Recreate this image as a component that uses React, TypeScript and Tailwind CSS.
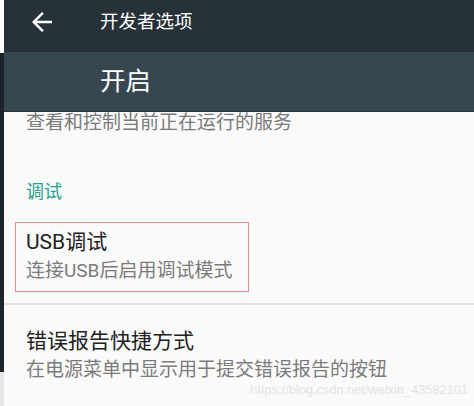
const font = { fontFamily: 'Roboto, "Noto Sans CJK SC", sans-serif' };

const BackArrow = () => (
  <svg viewBox="0 0 24 24" className="h-[30px] w-[30px] fill-white">
    <path d="M20 11H7.83l5.59-5.59L12 4l-8 8 8 8 1.41-1.41L7.83 13H20v-2z" />
  </svg>
);

export default function App() {
  return (
    <div className="relative flex h-[406px] w-[474px] overflow-hidden bg-[#fafafa]" style={font}>
      <div className="flex w-[4px] flex-col">
        <div className="h-[53px] bg-white" />
        <div className="h-[319px] bg-[#1e232b]" />
        <div className="flex-1 bg-[#e6e6e6]" />
      </div>

      <div className="flex flex-1 flex-col">
        <div className="flex h-[52px] items-center bg-[#263238] pb-[8px]">
          <div className="ml-[23px]">
            <BackArrow />
          </div>
          <span className="ml-[43px] text-[18.5px] leading-none text-white">开发者选项</span>
        </div>

        <div className="flex h-[60px] items-center border-b border-[#2a353b] bg-[#37474f] pl-[96px]">
          <span className="text-[25.5px] leading-none text-white">开启</span>
        </div>

        <div className="pl-[22px] text-[19px] leading-[22px] text-[#7a7a7a]">
          查看和控制当前正在运行的服务
        </div>

        <div className="mt-[46px] pl-[22px] text-[18px] leading-[24px] text-[#26a08f]">调试</div>

        <div className="mt-[18px] ml-[11px] w-[234px] border border-[#e88a8f] pt-[5px] pb-[7px] pl-[10px]">
          <div className="text-[21px] leading-[28px] text-[#212121]">USB调试</div>
          <div className="mt-[2px] text-[19px] leading-[26px] text-[#7a7a7a]">连接USB后启用调试模式</div>
        </div>

        <div className="mt-[11px] h-[2px] bg-[#e2e2e2]" />

        <div className="mt-[22px] pl-[22px]">
          <div className="text-[21px] leading-[28px] text-[#212121]">错误报告快捷方式</div>
          <div className="mt-[2px] text-[19px] leading-[26px] text-[#7a7a7a]">在电源菜单中显示用于提交错误报告的按钮</div>
        </div>
      </div>

      <span
        className="absolute right-[6px] top-[382px] text-[12.8px] leading-[16px] text-[#e3e3e3]"
        style={{ fontFamily: '"Liberation Sans", sans-serif' }}
      >
        https://blog.csdn.net/weixin_43582101
      </span>
    </div>
  );
}
